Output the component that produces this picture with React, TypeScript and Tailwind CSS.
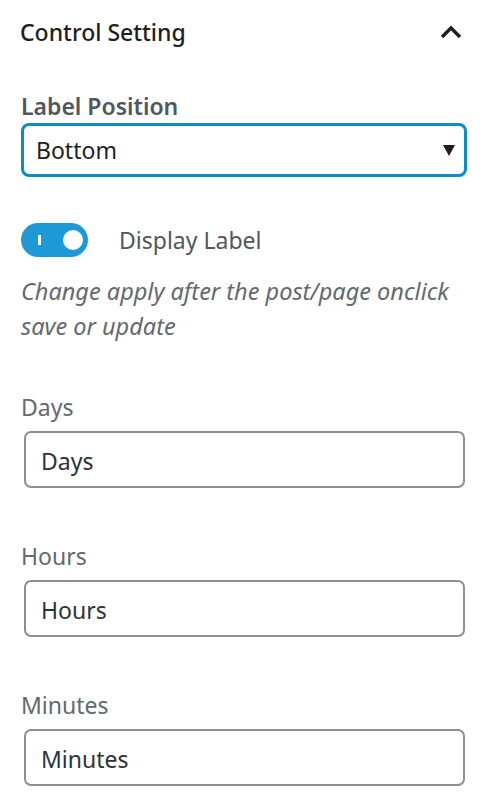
import React, { useState } from "react";

const font = { fontFamily: '"Noto Sans", "Open Sans", sans-serif' };

function TextField({ label, value }: { label: string; value: string }) {
  return (
    <div className="mt-[54px] first:mt-[49px]">
      <div className="h-[28px] leading-[28px] text-[23px] text-[#646970]">{label}</div>
      <div className="mt-[10px] ml-[3px] mr-[19px] h-[57px] rounded-[7px] border-2 border-[#8c8f94] bg-white flex items-center pl-[15px] pt-[3px] text-[23px] text-[#2c3338]">
        {value}
      </div>
    </div>
  );
}

export default function App() {
  const [on, setOn] = useState(true);

  return (
    <div className="w-[484px] h-[811px] bg-white overflow-hidden" style={font}>
      {/* panel header */}
      <div className="h-[64px] flex items-center justify-between pl-[20px] pr-[22px]">
        <span className="text-[23px] font-medium text-[#1e1e1e]">Control Setting</span>
        <svg width="22" height="14" viewBox="0 0 22 14">
          <polyline points="2,12 11,3 20,12" fill="none" stroke="#1e1e1e" strokeWidth="3.4" />
        </svg>
      </div>

      <div className="pl-[21px]">
        <div className="mt-[28px] h-[28px] leading-[28px] text-[23px] font-semibold text-[#50575e]">
          Label Position
        </div>
        <div className="mt-[3px] mr-[17px] h-[54px] rounded-[8px] border-[3px] border-[#0c8dc3] flex items-center justify-between pl-[12px] pr-[9px]">
          <span className="text-[23px] text-[#1e1e1e]">Bottom</span>
          <svg width="12" height="11" viewBox="0 0 12 11">
            <polygon points="0,0 12,0 6,11" fill="#1e1e1e" />
          </svg>
        </div>

        <div className="mt-[46px] flex items-center h-[34px]">
          <button
            onClick={() => setOn(!on)}
            className="relative w-[67px] h-[34px] rounded-full bg-[#1d9ad5]"
          >
            <span className="absolute left-[17px] top-[12px] w-[3px] h-[10px] bg-white" />
            <span className="absolute left-[42px] top-[7px] w-[20px] h-[20px] rounded-full bg-white" />
          </button>
          <span className="ml-[31px] text-[23px] text-[#50575e]">Display Label</span>
        </div>

        <p className="mt-[17px] text-[23.5px] leading-[35px] italic text-[#646970] pr-[10px]">
          Change apply after the post/page onclick save or update
        </p>

        <div>
          <TextField label="Days" value="Days" />
          <TextField label="Hours" value="Hours" />
          <TextField label="Minutes" value="Minutes" />
        </div>
      </div>
    </div>
  );
}
